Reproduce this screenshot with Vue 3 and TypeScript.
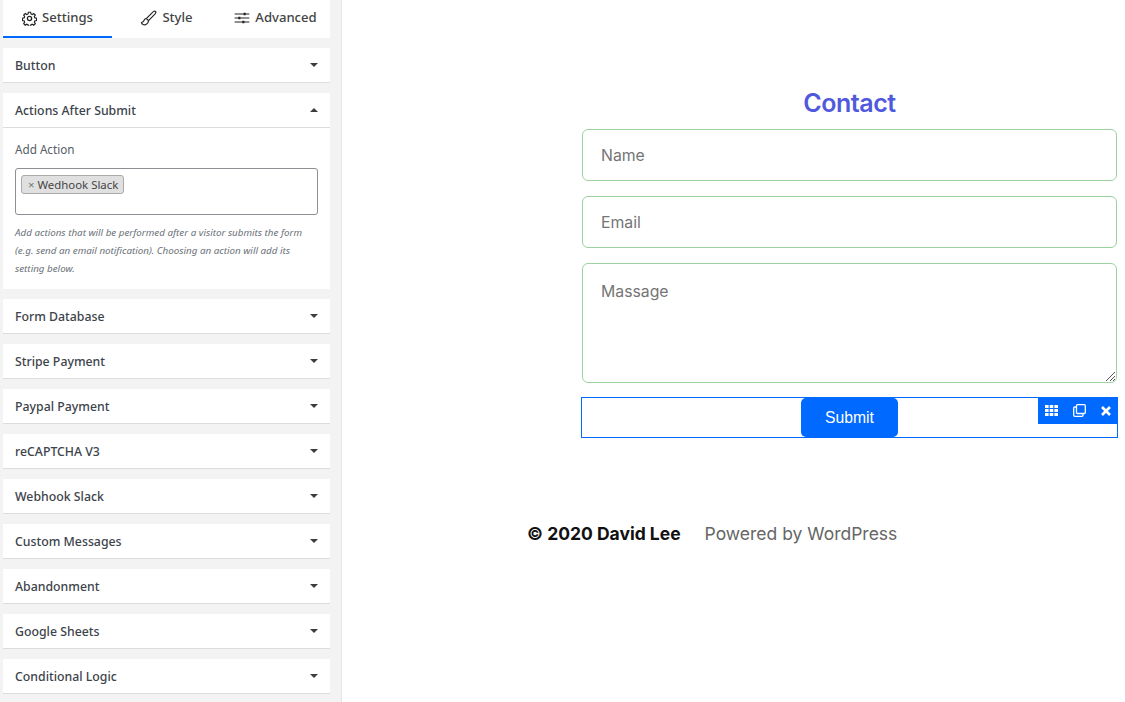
<script setup lang="ts">
const before: string[] = ['Button']
const after: string[] = ['Form Database','Stripe Payment','Paypal Payment','reCAPTCHA V3','Webhook Slack','Custom Messages','Abandonment','Google Sheets','Conditional Logic']
</script>

<template>
  <div class="page">
    <aside class="side">
      <nav class="tabs">
        <div class="tab active">
          <svg class="ic" width="15" height="15" viewBox="0 0 24 24" fill="none" stroke="#222" stroke-width="2.100"><circle cx="12" cy="12" r="3.400"/><path d="M10 2h4l.6 3 2.300 1 2.600-1.700 2.800 2.800-1.700 2.600 1 2.300 3 .6v4l-3 .6-1 2.300 1.700 2.600-2.800 2.800-2.600-1.700-2.300 1-.6 3h-4l-.6-3-2.300-1-2.600 1.700-2.800-2.800 1.700-2.600-1-2.300-3-.6v-4l3-.6 1-2.300-1.700-2.600 2.800-2.800 2.600 1.700 2.300-1z" transform="translate(1.200 .2) scale(.9)"/></svg>
          <span>Settings</span>
        </div>
        <div class="tab">
          <svg class="ic" width="17" height="17" viewBox="0 0 24 24" fill="none" stroke="#222" stroke-width="1.600"><path d="M22 2c1 1 0 3-2 5l-8 8-3-3 8-8c2-2 4-3 5-2z"/><path d="M9 12c-3 0-3 2-4 4-1 1-2 1-3 2 1 3 5 4 7 2 3-2 3-3 3-5"/></svg>
          <span>Style</span>
        </div>
        <div class="tab">
          <svg class="ic" width="16" height="16" viewBox="0 0 24 24" fill="none" stroke="#222" stroke-width="1.800"><path d="M1 6h22M1 12h22M1 18h22"/><path d="M16 4v4M8 10v4M14 16v4" stroke-width="3.200"/></svg>
          <span>Advanced</span>
        </div>
      </nav>

      <section v-for="t in before" :key="t" class="panel">
        <header class="head"><span>{{ t }}</span><i class="caret"></i></header>
      </section>

      <section class="panel">
        <header class="head"><span>Actions After Submit</span><i class="caret up"></i></header>
        <div class="body">
          <label class="lbl">Add Action</label>
          <div class="select"><span class="chip"><b>×</b> Wedhook Slack</span></div>
          <p class="help">Add actions that will be performed after a visitor submits the form (e.g. send an email notification). Choosing an action will add its setting below.</p>
        </div>
      </section>

      <section v-for="t in after" :key="t" class="panel">
        <header class="head"><span>{{ t }}</span><i class="caret"></i></header>
      </section>
    </aside>

    <main class="main">
      <div class="form">
        <h2 class="title">Contact</h2>
        <div class="field">Name</div>
        <div class="field">Email</div>
        <div class="field area">Massage
          <svg class="grip" width="9" height="9" viewBox="0 0 9 9" stroke="#555" stroke-width="1"><path d="M0 9 9 0M4 9l5-5M7 9l2-2"/></svg>
        </div>
        <div class="submit-row">
          <button class="submit">Submit</button>
          <div class="tools">
            <svg width="13" height="11" viewBox="0 0 13 11" fill="#fff"><rect x="0" y="0" width="3.600" height="3"/><rect x="4.700" y="0" width="3.600" height="3"/><rect x="9.400" y="0" width="3.600" height="3"/><rect x="0" y="4" width="3.600" height="3"/><rect x="4.700" y="4" width="3.600" height="3"/><rect x="9.400" y="4" width="3.600" height="3"/><rect x="0" y="8" width="3.600" height="3"/><rect x="4.700" y="8" width="3.600" height="3"/><rect x="9.400" y="8" width="3.600" height="3"/></svg>
            <svg width="13" height="13" viewBox="0 0 13 13" fill="none" stroke="#fff" stroke-width="1.300"><rect x="3.500" y=".7" width="8.800" height="8.800" rx="1"/><path d="M3.500 3H1.700a1 1 0 0 0-1 1v7.300a1 1 0 0 0 1 1H9a1 1 0 0 0 1-1V9.500"/></svg>
            <svg width="10" height="10" viewBox="0 0 10 10" stroke="#fff" stroke-width="2.600"><path d="M1 1l8 8M9 1l-8 8"/></svg>
          </div>
        </div>
      </div>
      <footer class="foot"><strong>© 2020 David Lee</strong><span>Powered by WordPress</span></footer>
    </main>
  </div>
</template>

<style>
html, body { margin: 0; background: #fff; overflow: hidden; }
</style>

<style scoped>
.page { display: flex; width: 1125px; height: 702px; overflow: hidden; font-family: "Noto Sans", "Open Sans", sans-serif; }
.side { width: 342px; height: 702px; background: #f3f3f3; border-right: 1px solid #e6e6e6; padding: 0 11px 0 3px; box-sizing: border-box; display: flex; flex-direction: column; gap: 10px; flex: none; overflow: hidden; }
.tabs { height: 38px; background: #fff; display: flex; flex: none; }
.tab { display: flex; align-items: center; justify-content: center; gap: 5px; height: 38px; width: 109px; padding-bottom: 2px; box-sizing: border-box; font-size: 13.100px; font-weight: 500; color: #444; border-bottom: 2px solid transparent; }
.ic { position: relative; top: 1px; }
.tab.active { border-bottom-color: #0069ff; }
.panel { background: #fff; flex: none; }
.head { height: 35px; box-sizing: border-box; border-bottom: 1px solid #dcdcdc; padding: 0 12px; display: flex; justify-content: space-between; align-items: center; font-size: 12.300px; font-weight: 500; color: #3c434a; }
.caret { width: 0; height: 0; border: 4.500px solid transparent; border-top: 4.500px solid #3c3c3c; border-bottom: 0; }
.caret.up { border-top: 0; border-bottom: 4.500px solid #3c3c3c; }
.body { padding: 13px 12px 11px; height: 161px; box-sizing: border-box; }
.lbl { display: block; font-size: 11.700px; line-height: 16px; color: #555d66; }
.select { margin-top: 11px; height: 47px; box-sizing: border-box; border: 1px solid #8c8f94; border-radius: 3px; padding: 6px 5px; display: flex; align-items: flex-start; }
.chip { box-sizing: border-box; background: #e0e0e0; border: 1px solid #aaa; border-radius: 3px; font-size: 11.400px; line-height: 17px; height: 19px; padding: 0 5px 0 6px; color: #444; }
.chip b { font-weight: 400; color: #777; }
.help { margin: 9px 0 0; font-size: 9.800px; line-height: 18px; font-style: italic; color: #6a7178; }
.main { flex: 1; position: relative; font-family: Inter, sans-serif; }
.form { width: 535px; margin-left: 240px; padding-top: 87px; display: flex; flex-direction: column; }
.title { margin: 0 0 9px; height: 33px; line-height: 33px; text-align: center; font-size: 25px; font-weight: 600; letter-spacing: -.45px; color: #5058dd; }
.field { height: 52px; box-sizing: border-box; border: 1px solid #9ad39d; border-radius: 6px; padding: 0 18px; margin-bottom: 15px; display: flex; align-items: center; font-size: 15.800px; color: #757575; }
.field.area { height: 120px; align-items: flex-start; padding-top: 18px; position: relative; margin-bottom: 14px; line-height: 20px; }
.grip { position: absolute; right: 1px; bottom: 1px; }
.submit-row { position: relative; height: 41px; margin: 0 -1px; box-sizing: border-box; border: 1px solid #0069ff; display: flex; justify-content: center; }
.submit { width: 97px; height: 39px; padding: 1px 0 0; background: #0069ff; color: #fff; border: 0; border-radius: 5px; font: 400 15.700px "Liberation Sans", Arial, sans-serif; }
.tools { position: absolute; top: -1px; right: -1px; width: 80px; height: 27px; background: #0069ff; display: flex; align-items: center; justify-content: flex-start; gap: 15px; padding-left: 7px; box-sizing: border-box; }
.foot { margin-left: 185px; margin-top: 84px; display: flex; gap: 24px; font-size: 17.500px; line-height: 24px; color: #666; }
.foot strong { color: #111; font-weight: 700; }
</style>
